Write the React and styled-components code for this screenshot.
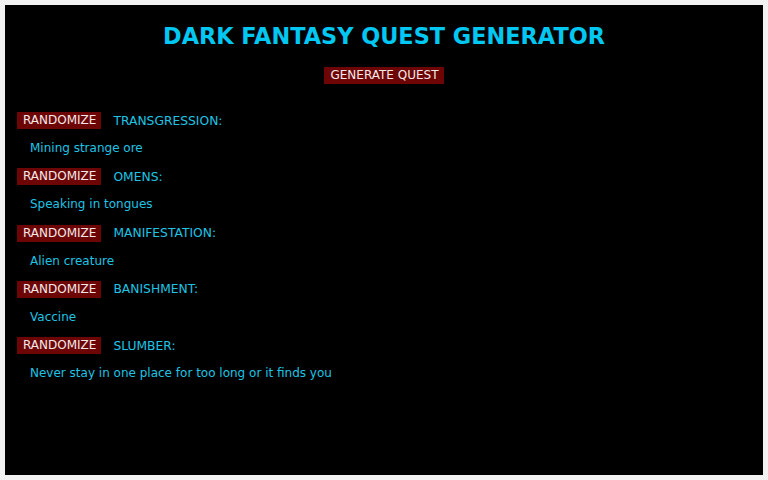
import React from 'react'
import styled, { createGlobalStyle } from 'styled-components'

const GlobalStyle = createGlobalStyle`
  body {
    margin: 0;
    padding: 5px;
    background: #f2f2f2;
    font-family: "DejaVu Sans", "Liberation Sans", sans-serif;
  }
`

const Panel = styled.div`
  background: #000;
  height: 470px;
  width: 758px;
  padding-top: 16px;
  box-sizing: border-box;
  display: flex;
  flex-direction: column;
`

const Title = styled.h1`
  margin: 0;
  text-align: center;
  color: #00c8f2;
  font-size: 22.4px;
  line-height: 30px;
  font-weight: bold;
`

const Center = styled.div`
  display: flex;
  justify-content: center;
  margin-top: 16px;
`

const RedButton = styled.button`
  background: #6e0505;
  color: #f2e8e8;
  border: none;
  border-radius: 0;
  padding: 0 5px 0 6px;
  height: 17px;
  font-family: inherit;
  font-size: 12px;
  line-height: 17px;
  cursor: pointer;
`

const List = styled.div`
  margin-top: 28px;
  padding-left: 12px;
  display: flex;
  flex-direction: column;
`

const Row = styled.div`
  display: flex;
  flex-direction: column;
  padding-bottom: 11.25px;
`

const Header = styled.div`
  display: flex;
  align-items: center;
  gap: 12px;
  height: 17px;
  margin-bottom: 11px;
`

const Label = styled.span`
  color: #1ec4e4;
  font-size: 12.3px;
`

const Value = styled.div`
  color: #1ec4e4;
  font-size: 12px;
  line-height: 17px;
  padding-left: 13px;
`

const steps = [
  ['TRANSGRESSION', 'Mining strange ore'],
  ['OMENS', 'Speaking in tongues'],
  ['MANIFESTATION', 'Alien creature'],
  ['BANISHMENT', 'Vaccine'],
  ['SLUMBER', 'Never stay in one place for too long or it finds you'],
]

export default function App() {
  return (
    <>
      <GlobalStyle />
      <Panel>
        <Title>DARK FANTASY QUEST GENERATOR</Title>
        <Center>
          <RedButton>GENERATE QUEST</RedButton>
        </Center>
        <List>
          {steps.map(([name, text]) => (
            <Row key={name}>
              <Header>
                <RedButton>RANDOMIZE</RedButton>
                <Label>{name}:</Label>
              </Header>
              <Value>{text}</Value>
            </Row>
          ))}
        </List>
      </Panel>
    </>
  )
}
